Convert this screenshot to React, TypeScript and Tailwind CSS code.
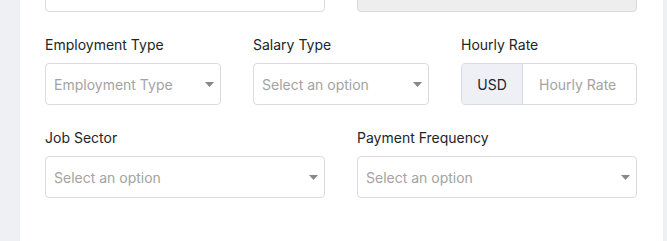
import React from "react";

function Caret() {
  return (
    <svg width="9" height="5" viewBox="0 0 9 5" className="shrink-0">
      <path d="M0 0 L9 0 L4.5 5 Z" fill="#888888" />
    </svg>
  );
}

function Select({ placeholder }: { placeholder: string }) {
  return (
    <div className="flex h-[42px] items-center justify-between rounded-[4px] border border-[#d8dbe0] bg-white pl-2 pr-[6px]">
      <span className="text-[14px] text-[#a3a3a3]">{placeholder}</span>
      <Caret />
    </div>
  );
}

function Label({ children }: { children: React.ReactNode }) {
  return <div className="mb-2 h-5 text-[14px] leading-5 text-[#212529]">{children}</div>;
}

export default function App() {
  return (
    <div
      className="flex h-[241px] w-[667px] overflow-hidden bg-[#eef0f4]"
      style={{ fontFamily: "Inter, 'Noto Sans', sans-serif" }}
    >
      <div className="ml-[20px] w-[643px] bg-white pl-[25px] pr-[26px]">
        <div className="-mt-[30px] grid grid-cols-2 gap-x-8">
          <div className="h-[42px] rounded-[4px] border border-[#d8dbe0] bg-white" />
          <div className="h-[42px] rounded-[4px] border border-[#d8dbe0] bg-[#eeeeee]" />
        </div>
        <div className="mt-[23px] grid grid-cols-3 gap-x-8">
          <div>
            <Label>Employment Type</Label>
            <Select placeholder="Employment Type" />
          </div>
          <div>
            <Label>Salary Type</Label>
            <Select placeholder="Select an option" />
          </div>
          <div>
            <Label>Hourly Rate</Label>
            <div className="flex h-[42px] overflow-hidden rounded-[4px] border border-[#d8dbe0]">
              <div className="flex w-[61px] items-center justify-center border-r border-[#d8dbe0] bg-[#eef0f5] text-[14px] text-[#212529]">
                USD
              </div>
              <div className="flex flex-1 items-center pl-4 text-[14px] text-[#a3a3a3]">Hourly Rate</div>
            </div>
          </div>
        </div>
        <div className="mt-[23px] grid grid-cols-2 gap-x-8">
          <div>
            <Label>Job Sector</Label>
            <Select placeholder="Select an option" />
          </div>
          <div>
            <Label>Payment Frequency</Label>
            <Select placeholder="Select an option" />
          </div>
        </div>
      </div>
    </div>
  );
}
